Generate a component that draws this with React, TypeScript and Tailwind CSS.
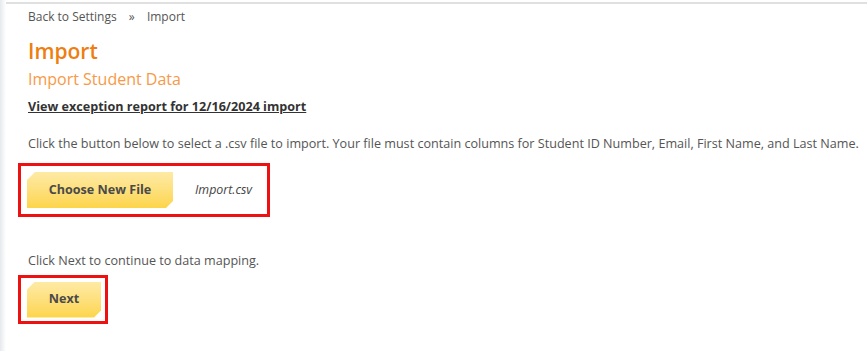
const corners = "[clip-path:polygon(8px_0,100%_0,100%_calc(100%-7px),calc(100%-7px)_100%,0_100%,0_8px)]";

function YellowButton({ label, className }: { label: string; className: string }) {
  return (
    <button
      className={`${className} ${corners} h-9 bg-gradient-to-b from-[#feeaa4] to-[#fdd548] text-[12.6px] font-bold text-[#4a4a4a]`}
    >
      {label}
    </button>
  );
}

export default function App() {
  return (
    <div className="h-[351px] w-[867px] bg-white font-['Open_Sans',sans-serif] text-[#555]">
      <div className="flex h-full">
        <div className="w-[6px] bg-gradient-to-r from-[#e6e9ec] to-white" />
        <div className="flex-1 border-t-2 border-[#e0e0e0] mt-[2px]">
          <div className="pl-[22px] pt-[3px]">
            <p className="text-[12px] leading-5">
              Back to Settings <span className="mx-[9px]">»</span> Import
            </p>

            <h1 className="mt-[10px] text-[21px] font-semibold leading-7 text-[#ee7d12]">Import</h1>
            <h2 className="mt-[2px] text-[16px] leading-6 text-[#f79a48]">Import Student Data</h2>

            <a href="#" className="mt-[6px] block text-[12.6px] font-bold leading-5 text-[#333] underline">
              View exception report for 12/16/2024 import
            </a>

            <p className="mt-[17px] whitespace-nowrap text-[12.6px] leading-5">
              Click the button below to select a .csv file to import. Your file must contain columns for Student ID
              Number, Email, First Name, and Last Name.
            </p>

            <div className="-ml-[10px] mt-[9px] flex h-[54px] w-[252px] items-center border-[3px] border-[#ee1111] pl-[6px]">
              <YellowButton label="Choose New File" className="w-[146px]" />
              <span className="ml-[22px] text-[12.4px] italic text-[#444]">Import.csv</span>
            </div>

            <p className="mt-[34px] text-[12.6px] leading-5">Click Next to continue to data mapping.</p>

            <div className="-ml-[10px] mt-[4px] flex h-[49px] w-[90px] items-center border-[3px] border-[#ee1111] pl-[6px]">
              <YellowButton label="Next" className="w-[74px]" />
            </div>
          </div>
        </div>
      </div>
    </div>
  );
}
